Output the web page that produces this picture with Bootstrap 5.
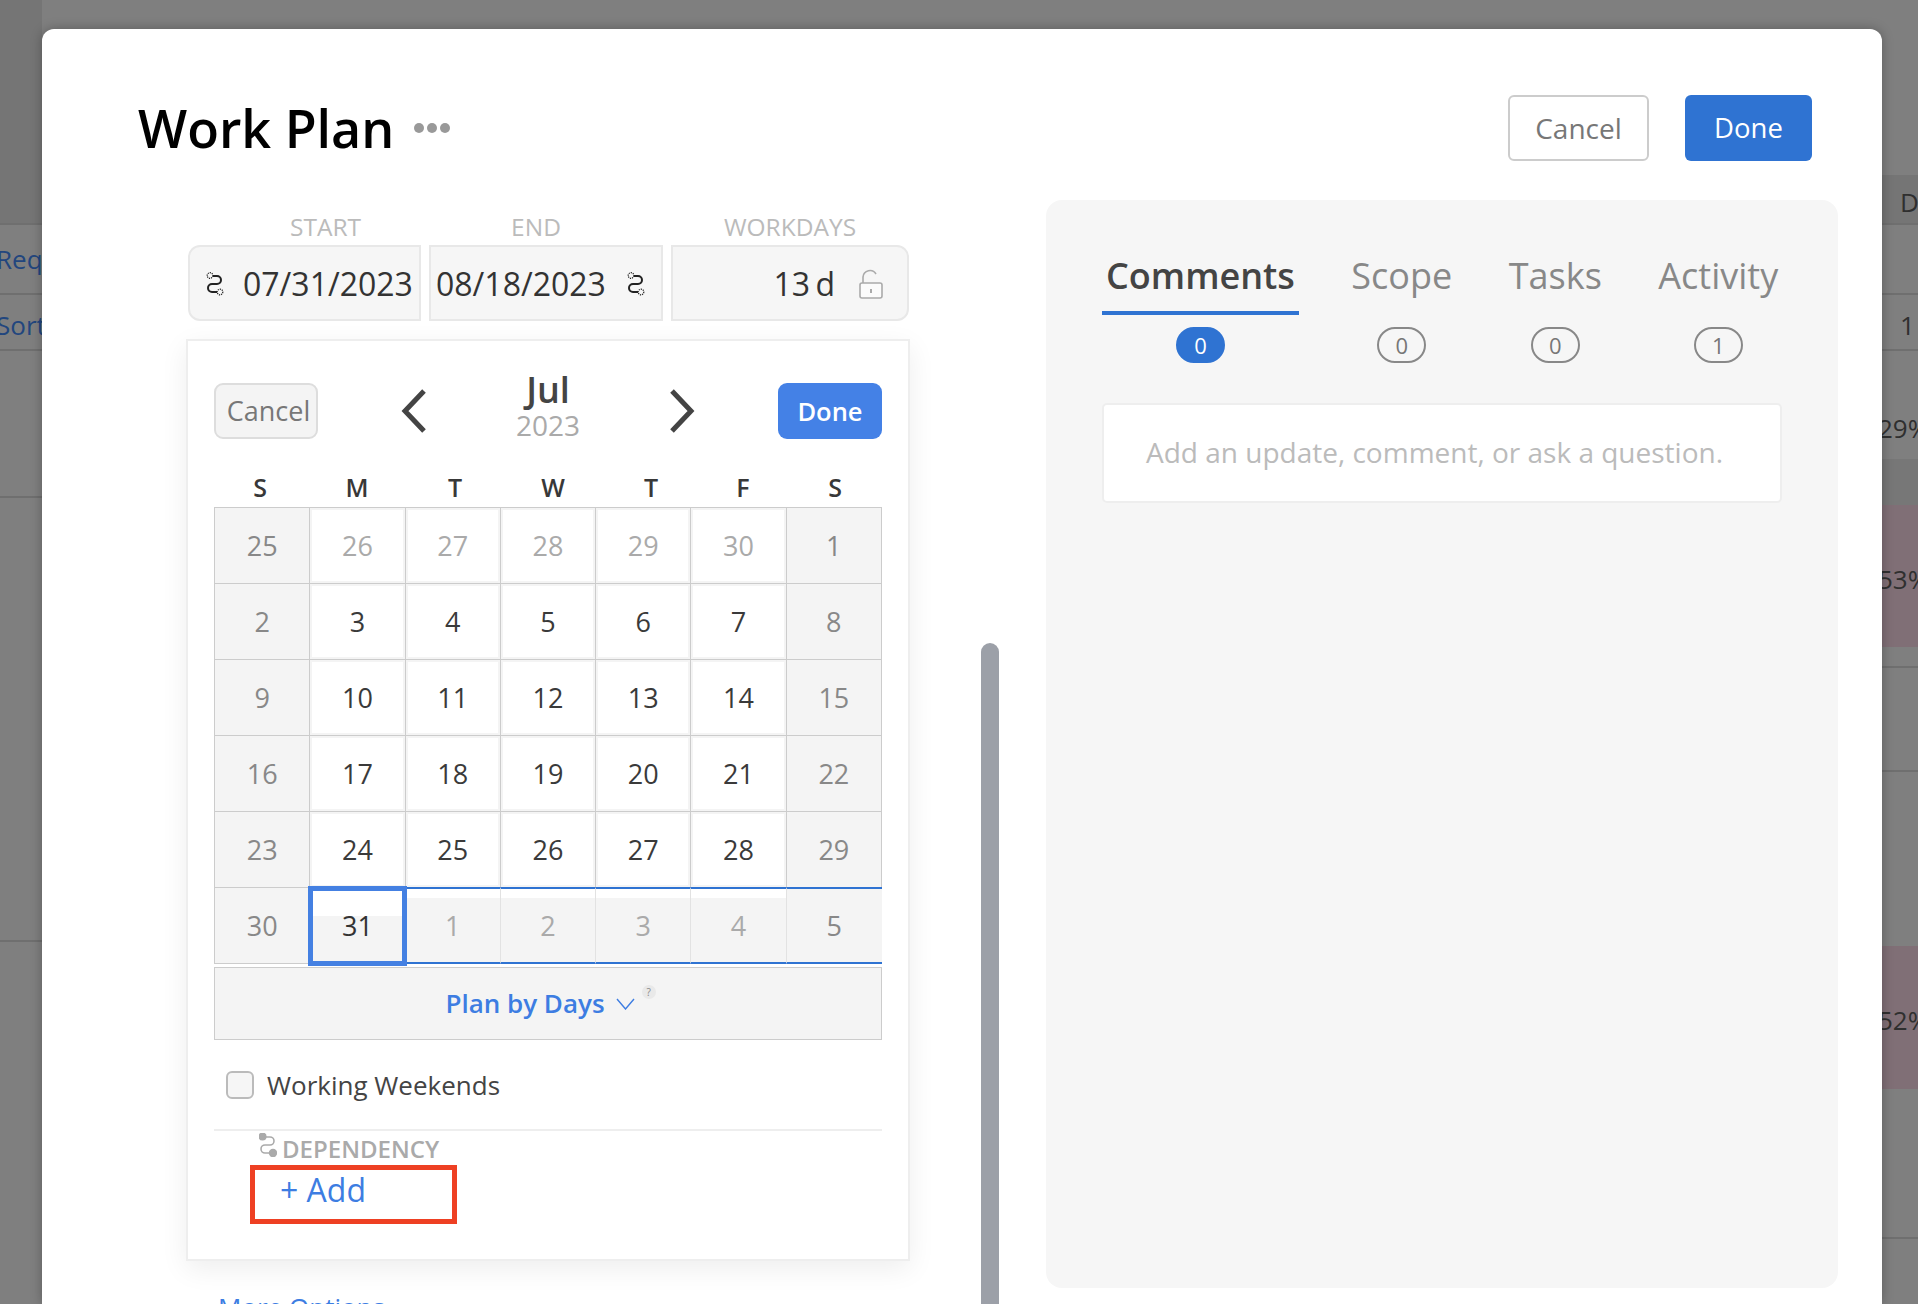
<!DOCTYPE html>
<html lang="en">
<head>
  <meta charset="UTF-8">
  <title>Work Plan</title>
  <meta name="viewport" content="width=device-width, initial-scale=1">
  <link href="https://cdn.jsdelivr.net/npm/bootstrap@5.3.3/dist/css/bootstrap.min.css" rel="stylesheet">
  <style>
    html, body { height: 1304px; overflow: hidden; }
    body { background-color: #7f7f7f; font-family: "Open Sans", sans-serif; color: #333; position: relative; }

    /* page behind the dialog */
    .back-left, .back-right { display: flex; flex-direction: column; height: 1304px; overflow: hidden; white-space: nowrap; font-size: 26px; }
    .back-left { width: 42px; color: #22467e; }
    .back-right { width: 36px; color: #2f2f2f; }
    .back-row { flex: none; border-bottom: 2px solid #6f6f6f; display: flex; align-items: center; }
    .back-left .back-row span { margin-left: -4px; }
    .back-right .back-row span { margin-left: 18px; }
    .back-right .pct span { margin-left: -4px; }
    .nudge-low { padding-top: 6px; }
    .nudge-more { padding-top: 46px; }
    .tone-head { background: #757575; }
    .tone-band { background: #777; border-bottom: 0; }
    .tone-pink { background: #806f76; border-bottom: 0; }

    /* dialog */
    .plan-dialog { position: absolute; left: 42px; right: 36px; top: 29px; bottom: 0; background: #fff; border-radius: 12px 12px 0 0; box-shadow: 0 0 12px rgba(0,0,0,.28); overflow: hidden; }
    .plan-head { padding: 66px 70px 0 96px; height: 132px; }
    .plan-title { font-size: 52px; font-weight: 600; color: #000; margin: 0; line-height: 66px; }
    .plan-dots { margin-left: 19px; }
    .btn-plan-cancel, .btn-plan-done { font-size: 28px; height: 66px; border-radius: 6px; padding: 0; }
    .btn-plan-cancel { width: 141px; background: #fff; border: 2px solid #ccc; color: #777; }
    .btn-plan-done { width: 127px; background: #2f73d2; border: 0; color: #fff; font-size: 27.5px; font-weight: 500; margin-left: 36px; }

    .plan-left { width: 724px; margin-left: 144px; flex: none; }
    .field-labels { height: 44px; font-size: 24.5px; color: #bbb; line-height: 1; padding-bottom: 6px; margin-left: 2px; gap: 8px; }
    .field-box { height: 76px; background: #f6f6f6; border: 2px solid #e8e8e8; font-size: 32px; color: #333; white-space: nowrap; padding-top: 1px; }
    .f-start { width: 233px; border-radius: 12px 0 0 12px; padding-left: 16px; }
    .f-end { width: 234px; padding-left: 5px; }
    .f-days { width: 238px; border-radius: 0 12px 12px 0; padding-right: 24px; justify-content: flex-end; word-spacing: -3px; }
    .field-row { margin-left: 2px; gap: 8px; }
    .lab-start { width: 233px; padding-left: 42px; }
    .lab-end { width: 234px; padding-right: 20px; }
    .lab-days { width: 238px; }

    .cal-panel { height: 922px; margin-top: 18px; border: 2px solid #eee; padding: 41px 26px 0; box-shadow: 0 8px 26px rgba(0,0,0,.07); background: #fff; }
    .cal-cancel, .cal-done { height: 56px; width: 104px; padding: 0; border-radius: 9px; }
    .cal-cancel { background: #f4f4f4; border: 2px solid #ddd; color: #777; font-size: 27px; white-space: nowrap; padding-left: 5px; }
    .cal-done { background: #4481e6; border: 0; color: #fff; font-size: 25.5px; font-weight: 600; }
    .cal-nav { width: 294px; }
    .cal-month { font-size: 36px; font-weight: 600; color: #444; line-height: 40px; margin-top: -12px; }
    .cal-year { font-size: 28px; color: #aaa; line-height: 30px; }
    .week-head { display: grid; grid-template-columns: 92px 102px 94px 102px 94px 90px 94px; margin-top: 30px; height: 37px; font-size: 25px; font-weight: 600; color: #383838; line-height: 34px; text-align: center; }
    .cal-days { display: grid; grid-template-columns: repeat(7, 1fr); border-top: 1px solid #ccc; border-left: 1px solid #ccc; }
    .day-cell { height: 76px; border-right: 1px solid #ccc; border-bottom: 1px solid #ccc; font-size: 27px; line-height: 76px; text-align: center; background: #fff; color: #3a3a3a; box-shadow: inset 0 0 0 2px #f4f4f4; }
    .day-off { background: #f4f4f4; color: #888; box-shadow: none; }
    .day-out { color: #aaa; }
    .day-sel { position: relative; margin: -2px -1px -2px -2px; height: 80px; border: 5px solid #4480e2; line-height: 70px; color: #333; background: linear-gradient(#fff 25px, #f4f4f4 25px); box-shadow: none; z-index: 1; }
    .day-next { border-top: 2px solid #2f73d2; border-bottom: 2px solid #2f73d2; margin-top: -1px; height: 77px; border-right-color: #e2e2e2; line-height: 74px; color: #aaa; background: linear-gradient(#fff 9px, #f4f4f4 9px); box-shadow: none; }
    .day-end { background: #f4f4f4; color: #888; border-right: 0; }

    .plan-by { height: 73px; margin-top: 3px; background: #f4f4f4; border: 1px solid #ccc; color: #3d7de2; font-size: 26px; font-weight: 600; padding-left: 5px; }
    .plan-hint { width: 14px; height: 14px; border-radius: 50%; background: #e9e9e9; color: #888; font-size: 10px; line-height: 14px; text-align: center; font-weight: 400; margin: -24px 0 0 7px; }
    .weekend-row { margin-top: 31px; height: 28px; padding-left: 12px; min-height: 0; }
    .weekend-row .form-check-input { width: 28px; height: 28px; margin: 0; background-color: #f6f6f6; border: 2px solid #bbb; border-radius: 6px; float: none; flex: none; }
    .weekend-row .form-check-label { font-size: 26px; color: #444; margin-left: 13px; white-space: nowrap; }
    .dep-line { margin-top: 30px; border-top: 2px solid #eee; padding: 2px 0 0 45px; height: 36px; color: #aaa; font-size: 24px; font-weight: 600; }
    .dep-text { margin-left: 5px; margin-top: 5px; line-height: 22px; }
    .add-box { width: 207px; height: 59px; margin: 0 0 0 36px; border: 5px solid #ee4023; color: #3d7de2; font-size: 32px; line-height: 40px; padding: 0 0 0 25px; }
    .more-link { margin: 30px 0 0 32px; color: #3d7de2; font-size: 26px; line-height: 32px; white-space: nowrap; }

    .plan-scroll { position: absolute; left: 939px; top: 614px; bottom: -10px; width: 18px; background: #9ca0a8; border-radius: 9px; }

    .side-panel { width: 792px; height: 1088px; margin: -1px 44px 0 auto; background: #f6f6f6; border-radius: 16px; padding: 51px 0 0 56px; flex: none; }
    .side-tabs { gap: 48.5px; }
    .side-tab { text-decoration: none; display: block; color: #888; font-size: 36px; line-height: 50px; height: 64px; padding: 0 4px; white-space: nowrap; text-align: center; }
    .side-tab.on { color: #444; font-weight: 600; border-bottom: 4px solid #2f73d2; }
    .count-pill { margin-top: 12px; width: 49px; height: 36px; border-radius: 18px; padding: 0; font-size: 22px; line-height: 32px; font-weight: 400; border: 2px solid #888; color: #777; background: transparent; }
    .count-pill.on { background: #2f73d2; border-color: #2f73d2; color: #fff; font-weight: 500; }
    .comment-box { width: 680px; height: 100px; margin-top: 40px; background: #fff; border: 2px solid #eee; border-radius: 5px; padding: 0 0 2px 42px; font-size: 28px; color: #bbb; white-space: nowrap; }
  </style>
</head>
<body>
  <!-- page behind the dialog -->
  <div class="d-flex justify-content-between">
    <div class="back-left">
      <div class="back-row tone-head" style="height:225px"></div>
      <div class="back-row" style="height:70px"><span>Req</span></div>
      <div class="back-row nudge-low" style="height:56px"><span>Sort</span></div>
      <div class="back-row" style="height:147px"></div>
      <div class="back-row" style="height:444px"></div>
    </div>
    <div class="back-right">
      <div class="back-row" style="height:175px;border:0"></div>
      <div class="back-row tone-head nudge-low" style="height:50px"><span>D</span></div>
      <div class="back-row" style="height:70px"></div>
      <div class="back-row nudge-low" style="height:56px"><span>1</span></div>
      <div class="back-row pct nudge-more" style="height:108px;border:0"><span>29%</span></div>
      <div class="back-row tone-band" style="height:46px"></div>
      <div class="back-row tone-pink pct nudge-low" style="height:142px"><span>53%</span></div>
      <div class="back-row" style="height:21px"></div>
      <div class="back-row" style="height:104px"></div>
      <div class="back-row" style="height:26px;border:0"></div>
      <div class="back-row" style="height:148px;border:0"></div>
      <div class="back-row tone-pink pct nudge-low" style="height:143px"><span>52%</span></div>
      <div class="back-row" style="height:150px"></div>
    </div>
  </div>

  <div class="plan-dialog">
    <div class="plan-head d-flex justify-content-between">
      <div class="d-flex align-items-center" style="height:66px">
        <h1 class="plan-title">Work Plan</h1>
        <svg class="plan-dots" width="38" height="12" viewBox="0 0 38 12" fill="#999"><circle cx="6" cy="6" r="5"/><circle cx="19" cy="6" r="5"/><circle cx="32" cy="6" r="5"/></svg>
      </div>
      <div class="d-flex">
        <button class="btn btn-plan-cancel" type="button">Cancel</button>
        <button class="btn btn-plan-done" type="button">Done</button>
      </div>
    </div>

    <div class="d-flex align-items-start" style="padding-top:40px">
      <div class="plan-left">
        <div class="field-labels d-flex align-items-end text-center">
          <div class="lab-start">START</div>
          <div class="lab-end">END</div>
          <div class="lab-days">WORKDAYS</div>
        </div>
        <div class="field-row d-flex">
          <div class="field-box f-start d-flex align-items-center">
            <svg width="18" height="24" viewBox="0 0 18 24" fill="none" stroke="#222"><path stroke-width="2" d="M7 4h4a4 4 0 0 1 0 8H6a4 4 0 0 0 0 8h5"/><circle cx="4" cy="3.5" r="2.8" stroke-width="1.2" stroke-dasharray="1.2 .9"/><circle cx="14" cy="20" r="2.8" stroke-width="1.2" stroke-dasharray="1.2 .9"/></svg>
            <span style="margin-left:19px">07/31/2023</span>
          </div>
          <div class="field-box f-end d-flex align-items-center">
            <span>08/18/2023</span>
            <svg style="margin-left:21px" width="18" height="24" viewBox="0 0 18 24" fill="none" stroke="#222"><path stroke-width="2" d="M7 4h4a4 4 0 0 1 0 8H6a4 4 0 0 0 0 8h5"/><circle cx="4" cy="3.5" r="2.8" stroke-width="1.2" stroke-dasharray="1.2 .9"/><circle cx="14" cy="20" r="2.8" stroke-width="1.2" stroke-dasharray="1.2 .9"/></svg>
          </div>
          <div class="field-box f-days d-flex align-items-center">
            <span>13 d</span>
            <svg style="margin-left:24px" width="24" height="30" viewBox="0 0 24 30" fill="none" stroke="#aaa" stroke-width="1.6"><path d="M4 14V8a7 7 0 0 1 13-3"/><rect x="1" y="14" width="22" height="15" rx="2" fill="#fbfbfb"/><path d="M12 20v4" stroke-width="2"/></svg>
          </div>
        </div>

        <div class="cal-panel">
          <div class="d-flex justify-content-between align-items-center">
            <button class="btn cal-cancel" type="button">Cancel</button>
            <div class="cal-nav d-flex justify-content-between align-items-center">
              <svg width="26" height="44" viewBox="0 0 26 44" fill="none" stroke="#444" stroke-width="5"><path d="M23 2 4 22l19 20"/></svg>
              <div class="text-center">
                <div class="cal-month">Jul</div>
                <div class="cal-year">2023</div>
              </div>
              <svg width="26" height="44" viewBox="0 0 26 44" fill="none" stroke="#444" stroke-width="5"><path d="M3 2l19 20L3 42"/></svg>
            </div>
            <button class="btn cal-done" type="button">Done</button>
          </div>

          <div class="week-head">
            <div>S</div><div>M</div><div>T</div><div>W</div><div>T</div><div>F</div><div>S</div>
          </div>
          <div class="cal-days" id="calDays"></div>

          <div class="plan-by d-flex justify-content-center align-items-center">
            <span>Plan by Days</span>
            <svg style="margin-left:11px" width="19" height="12" viewBox="0 0 19 12" fill="none" stroke="#3d7de2" stroke-width="1.4"><path d="M1 1l8.5 10L18 1"/></svg>
            <span class="plan-hint">?</span>
          </div>

          <div class="form-check weekend-row d-flex align-items-center">
            <input class="form-check-input" type="checkbox" id="workingWeekends">
            <label class="form-check-label" for="workingWeekends">Working Weekends</label>
          </div>

          <div class="dep-line d-flex align-items-start">
            <svg width="18" height="24" viewBox="0 0 18 24" fill="none" stroke="#aaa" stroke-width="1.6"><path d="M6 4h5a4 4 0 0 1 0 8H6a4 4 0 0 0 0 8h6"/><circle cx="3.6" cy="3.6" r="3.2" fill="#aaa"/><circle cx="14" cy="20" r="3.4" fill="#aaa"/></svg>
            <span class="dep-text">DEPENDENCY</span>
          </div>
          <div class="add-box">+ Add</div>
        </div>
        <div class="more-link">More Options</div>
      </div>

      <div class="side-panel">
        <div class="side-tabs d-flex">
          <div class="d-flex flex-column align-items-center">
            <a class="side-tab on" href="#">Comments</a>
            <span class="badge count-pill on">0</span>
          </div>
          <div class="d-flex flex-column align-items-center">
            <a class="side-tab" href="#">Scope</a>
            <span class="badge count-pill">0</span>
          </div>
          <div class="d-flex flex-column align-items-center">
            <a class="side-tab" href="#">Tasks</a>
            <span class="badge count-pill">0</span>
          </div>
          <div class="d-flex flex-column align-items-center">
            <a class="side-tab" href="#">Activity</a>
            <span class="badge count-pill">1</span>
          </div>
        </div>
        <div class="comment-box d-flex align-items-center">Add an update, comment, or ask a question.</div>
      </div>
    </div>

    <div class="plan-scroll"></div>
  </div>

  <script>
    // weeks of the month view
    const weeks = [
      [25, 26, 27, 28, 29, 30, 1],
      [2, 3, 4, 5, 6, 7, 8],
      [9, 10, 11, 12, 13, 14, 15],
      [16, 17, 18, 19, 20, 21, 22],
      [23, 24, 25, 26, 27, 28, 29],
      [30, 31, 1, 2, 3, 4, 5]
    ];
    const box = document.getElementById("calDays");
    weeks.forEach((week, w) => {
      week.forEach((n, d) => {
        let cls = "day-cell";
        if (w === 5 && d === 1) cls += " day-sel";
        else if (w === 5 && d === 6) cls += " day-next day-end";
        else if (w === 5 && d > 1) cls += " day-next";
        else if (d === 0 || d === 6) cls += " day-off";
        else if (w === 0) cls += " day-out";
        box.innerHTML += `<div class="${cls}">${n}</div>`;
      });
    });
  </script>
  <script src="https://cdn.jsdelivr.net/npm/bootstrap@5.3.3/dist/js/bootstrap.bundle.min.js"></script>
</body>
</html>
